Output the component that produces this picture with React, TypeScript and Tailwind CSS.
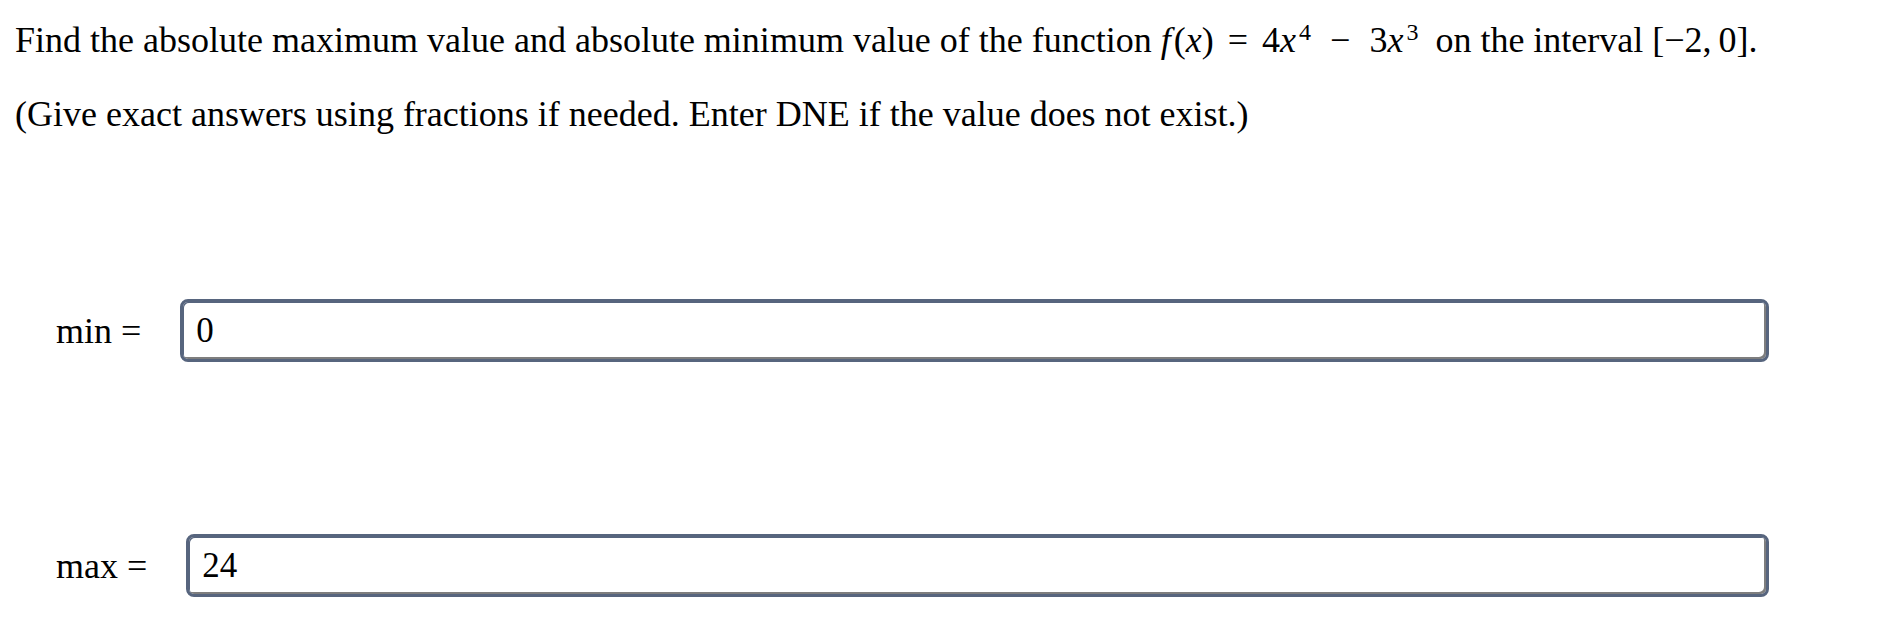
const Field = ({ value }: { value: string }) => (
  <input
    readOnly
    value={value}
    className="h-[63px] min-w-0 flex-1 rounded-[8px] border-[3px] border-[#57657e] bg-white pl-[13px] font-['Liberation_Serif',serif] text-[35px] text-black shadow-[inset_1px_1px_0_#57657e,inset_-2px_-2px_0_#7e7e7e] outline-none"
  />
);

export default function App() {
  return (
    <div className="min-h-screen bg-white pt-[20px] pl-[15px] font-['Liberation_Serif',serif] text-[36px] leading-[40px] text-black">
      <p>
        Find the absolute maximum value and absolute minimum value of the function{" "}
        <span className="whitespace-nowrap">
          <i>f</i>
          <span className="pl-[3px]">(</span>
          <i>x</i>)<span className="px-[14px]">=</span>4<i>x</i>
          <sup className="ml-[3px] text-[24px]">4</sup>
          <span className="px-[19px]">−</span>3<i>x</i>
          <sup className="ml-[3px] text-[24px]">3</sup>
        </span>
        <span className="pl-[8px]"> on the interval [−2,</span>
        <span className="pl-[7px]">0</span>].
      </p>
      <p className="mt-[34px]">
        (Give exact answers using fractions if needed. Enter DNE if the value does not exist.)
      </p>

      <div className="mt-[165px] mr-[109px] flex items-center gap-[39px] pl-[41px]">
        <span>
          min<span className="pl-[9px]">=</span>
        </span>
        <Field value="0" />
      </div>

      <div className="mt-[172px] mr-[109px] flex items-center gap-[39px] pl-[41px]">
        <span>
          max<span className="pl-[9px]">=</span>
        </span>
        <Field value="24" />
      </div>
    </div>
  );
}
